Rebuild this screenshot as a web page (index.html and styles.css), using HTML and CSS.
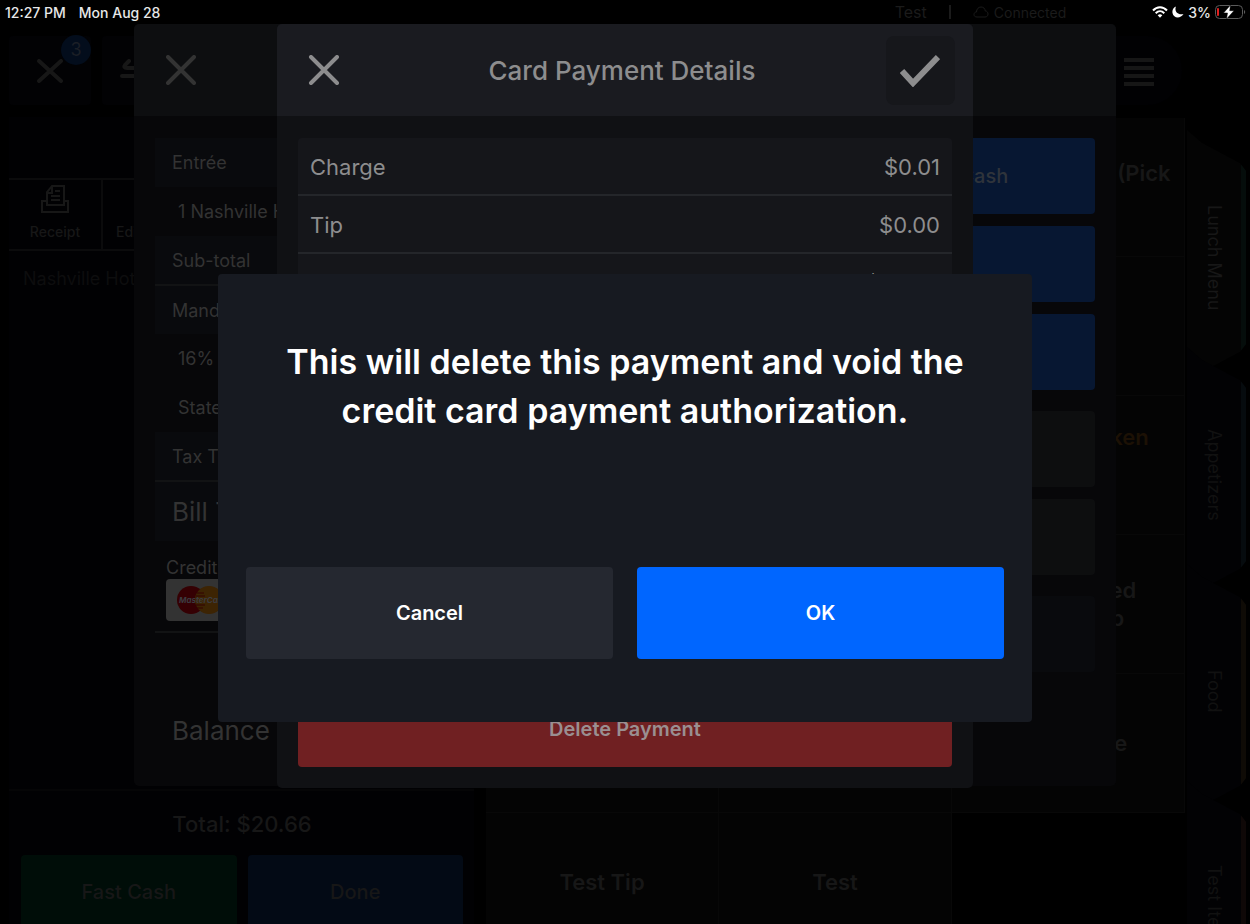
FILE: index.html
```html
<!DOCTYPE html>
<html lang="en">
<head>
    <meta charset="utf-8">
    <title>Card Payment Details</title>
    <link rel="stylesheet" href="styles.css">
</head>
<body>
    <header class="status">
        <span class="time">12:27 PM</span>
        <span>Mon Aug 28</span>
        <div class="station">
            <span class="name">Test</span>
            <span class="divider"></span>
            <svg width="16" height="12" viewBox="0 0 16 12" fill="none" stroke="currentColor"><path d="M4 11C2 11 1 10 1 8.500C1 7 2 6 3.500 6C3.500 3 5.500 1 8 1C10.500 1 12 2.500 12.300 5C14 5 15 6.300 15 8C15 9.800 14 11 12 11Z"/></svg>
            <span>Connected</span>
        </div>
        <div class="device">
            <svg width="16" height="12" viewBox="0 0 16 12" fill="none" stroke="#fff" stroke-width="2"><path d="M1 4.500C5 .2 11 .2 15 4.500M3.700 7.200C6.300 4.600 9.700 4.600 12.300 7.200"/><path d="M5.700 9.300C7 8 9 8 10.300 9.300L8 11.800Z" fill="#fff" stroke="none"/></svg>
            <svg width="12" height="12" viewBox="0 0 12 12"><path d="M4 .5C2 5 5.500 9.500 11.500 8C8.500 13 1.500 12.500 .5 7C0 4 1.500 1.500 4 .5Z" fill="#fff"/></svg>
            <span>3%</span>
            <svg width="31" height="14" viewBox="0 0 31 14"><rect x=".5" y=".5" width="27" height="13" rx="4" fill="none" stroke="#5b5b5b"/><path d="M29 5C30.600 5.500 30.600 8.500 29 9Z" fill="#5b5b5b"/><rect x="2" y="3" width="2" height="8" rx="1" fill="#e0201f"/><path d="M15.500 0L8.500 8H12.500L11.500 14L19 5.700H14.700Z" fill="#fff" stroke="#000" stroke-width=".5"/></svg>
        </div>
    </header>

    <main class="app">
        <nav class="toolbar">
            <button class="tool" aria-label="Close order">
                <svg width="26" height="24" viewBox="0 0 26 24"><path d="M2 2L24 22M24 2L2 22"/></svg>
                <span class="badge">3</span>
            </button>
            <button class="tool" aria-label="Undo">
                <svg width="46" height="24" viewBox="0 0 46 24"><path d="M9 2L5 6Q3 9 7 9H28M2 17H30"/></svg>
            </button>
            <button class="menu" aria-label="Menu">
                <svg width="30" height="30" viewBox="0 0 30 30"><path d="M0 4H30M0 12H30M0 20H30M0 28H30" stroke-width="4" stroke-linecap="butt"/></svg>
            </button>
        </nav>
        <div class="columns">
            <section class="order">
                <div class="order-head"></div>
                <div class="order-actions">
                    <button class="action">
                        <svg width="28" height="28" viewBox="0 0 28 28"><path d="M7 16H1V27H27V16H22M6 20V7L11 1H23V20ZM6 8H11V1M14 6H19M10 11H19M10 15H19" stroke-width="2" stroke-linecap="butt"/></svg>
                        Receipt
                    </button>
                    <button class="action">Edit Items</button>
                </div>
                <div class="order-items">Nashville Hot Chicken</div>
                <div class="order-foot">
                    <div class="total">Total: $20.66</div>
                    <div class="pay">
                        <button class="fast">Fast Cash</button>
                        <button class="done">Done</button>
                    </div>
                </div>
            </section>
            <section class="items">
                <button></button><button></button><button>Fried Tenders (Pick Two)</button>
                <button></button><button></button><button></button>
                <button></button><button></button><button class="orange">Crispy Chicken<br>and<br>Waffles</button>
                <button></button><button></button><button>Rice Mashed<br>Corn Soup</button>
                <button></button><button></button><button>Side Sauce</button>
                <button>Test Tip</button><button>Test</button>
            </section>
            <nav class="tabs">
                <a href="#" class="tab lunch">Lunch Menu</a>
                <a href="#" class="tab appetizers">Appetizers</a>
                <a href="#" class="tab food">Food</a>
                <a href="#" class="tab test">Test Items</a>
            </nav>
        </div>
    </main>

    <div class="layer layer-bill">
        <section class="modal bill">
            <header class="modal-head">
                <button class="close" aria-label="Close bill">
                    <svg width="32" height="30" viewBox="0 0 32 30"><path d="M3 2L29 28M29 2L3 28"/></svg>
                </button>
            </header>
            <div class="bill-body">
                <div class="bill-left">
                    <table class="lines">
                        <tr class="group"><th>Entrée</th></tr>
                        <tr><td>1 Nashville Hot Chicken</td></tr>
                        <tr class="group sum"><th>Sub-total</th></tr>
                        <tr class="group"><th>Mandatory</th></tr>
                        <tr><td>16% Gratuity</td></tr>
                        <tr><td>State Tax</td></tr>
                        <tr class="group sum"><th>Tax Total</th></tr>
                        <tr class="group big"><th>Bill Total</th></tr>
                    </table>
                    <div class="credit">
                        <span>Credit Card</span>
                        <svg width="66" height="42" viewBox="0 0 66 42"><rect width="66" height="42" rx="4" fill="#333"/><circle cx="25" cy="21" r="14" fill="#350003"/><circle cx="43" cy="21" r="14" fill="#3d2403"/><path d="M31 14H38M30 17H39M30 26H39M31 29H37" stroke="#350003"/><text x="13" y="24" class="brand">MasterCard</text></svg>
                    </div>
                    <div class="balance">Balance</div>
                </div>
                <div class="bill-right">
                    <button class="blue">Fast Cash</button>
                    <button class="blue"></button>
                    <button class="blue"></button>
                    <button class="gray first"></button>
                    <button class="gray"></button>
                    <button class="dark first"></button>
                </div>
            </div>
        </section>
    </div>

    <div class="layer layer-card">
        <section class="modal card">
            <header class="modal-head">
                <button class="close" aria-label="Close">
                    <svg width="32" height="30" viewBox="0 0 32 30"><path d="M3 2L29 28M29 2L3 28"/></svg>
                </button>
                <h2>Card Payment Details</h2>
                <button class="confirm" aria-label="Save">
                    <svg width="40" height="34" viewBox="0 0 40 34"><path d="M2 18L13 30L38 4" stroke-width="6" stroke-linecap="butt"/></svg>
                </button>
            </header>
            <div class="card-body">
                <table class="details">
                    <tr><th>Charge</th><td>$0.01</td></tr>
                    <tr><th>Tip</th><td>$0.00</td></tr>
                    <tr><th>Card</th><td>$20.66</td></tr>
                </table>
                <button class="delete">Delete Payment</button>
            </div>
        </section>
    </div>

    <div class="layer layer-alert">
        <section class="alert" role="alertdialog" aria-labelledby="message">
            <p id="message">This will delete this payment and void the credit card payment authorization.</p>
            <div class="alert-buttons">
                <button class="cancel">Cancel</button>
                <button class="ok">OK</button>
            </div>
        </section>
    </div>
</body>
</html>
```
FILE: styles.css
```css
* {
    box-sizing: border-box;
}

body {
    margin: 0;
    height: 100vh;
    display: flex;
    flex-direction: column;
    overflow: hidden;
    position: relative;
    background: #000;
    color: #171717;
    font-family: Inter, "Liberation Sans", sans-serif;
    font-size: 18px;
}

button {
    border: none;
    padding: 0;
    margin: 0;
    background: none;
    color: inherit;
    font: inherit;
    border-radius: 4px;
}

svg {
    flex: none;
}

button svg {
    fill: none;
    stroke: currentColor;
    stroke-width: 4;
    stroke-linecap: round;
    vertical-align: middle;
}

/* status bar */
.status {
    display: flex;
    align-items: center;
    height: 24px;
    flex: none;
    padding: 0 4px 0 5px;
    font-size: 14px;
    font-weight: 500;
    color: #e8e8e8;
}

.time {
    margin-right: 13px;
}

.station {
    display: flex;
    align-items: center;
    gap: 5px;
    margin-left: auto;
    margin-right: 86px;
    font-weight: 400;
    color: #1b1b1b;
}

.station .name {
    font-size: 16px;
}

.divider {
    width: 2px;
    height: 14px;
    margin: 0 17px;
    background: #1b1b1b;
}

.device {
    display: flex;
    align-items: center;
    gap: 4px;
}

/* order screen */
.app {
    flex: 1;
    min-height: 0;
    display: flex;
    flex-direction: column;
    padding: 12px 4px 0 9px;
}

.toolbar {
    display: flex;
    flex: none;
    gap: 11px;
    height: 69px;
    margin-bottom: 12px;
}

.tool {
    position: relative;
    width: 82px;
    background: #020204;
}

.badge {
    position: absolute;
    top: -1px;
    right: 0;
    width: 30px;
    height: 30px;
    border-radius: 50%;
    background: #030d1c;
    line-height: 30px;
    color: #1b1f26;
}

.menu {
    width: 116px;
    margin-left: auto;
    margin-right: 64px;
    padding-left: 30px;
    background: #010103;
    border-radius: 34px;
    color: #161616;
}

.columns {
    flex: 1;
    min-height: 0;
    display: flex;
    overflow: hidden;
}

.order {
    display: flex;
    flex-direction: column;
    flex: 1;
    margin-right: 12px;
    background: #010103;
}

.order-head {
    height: 61px;
}

.order-actions {
    display: flex;
    height: 73px;
    border: solid #0b0b0c;
    border-width: 2px 0;
}

.action {
    display: flex;
    flex-direction: column;
    align-items: center;
    justify-content: flex-end;
    gap: 10px;
    width: 94px;
    padding-bottom: 9px;
    border-right: 2px solid #0b0b0c;
    border-radius: 0;
    font-size: 14px;
    font-weight: 500;
    white-space: nowrap;
}

.order-items {
    flex: 1;
    padding: 17px 14px;
    color: #0d0d0e;
}

.order-foot {
    border-top: 2px solid #050506;
    padding: 20px 11px 0 12px;
}

.total {
    margin-bottom: 18px;
    text-align: center;
    font-size: 22px;
    font-weight: 500;
    line-height: 26px;
}

.pay {
    display: flex;
    gap: 11px;
    height: 69px;
    font-size: 20px;
    font-weight: 500;
}

.pay button {
    flex: 1;
    padding-top: 4px;
    border-radius: 4px 4px 0 0;
}

.fast {
    background: #000d08;
}

.done {
    background: #030a15;
}

.items {
    display: grid;
    grid-template-columns: repeat(3, 1fr);
    grid-auto-rows: 139px;
    flex: none;
    width: 57%;
    max-width: 699px;
    padding-top: 1px;
    overflow: hidden;
}

.items button {
    background: #040404;
    border: solid #080808;
    border-width: 0 1px 1px 0;
    border-radius: 0;
    font-size: 22px;
    font-weight: 600;
    line-height: 28px;
    color: #171717;
}

.items .orange {
    color: #1c1105;
}

.tabs {
    flex: none;
    width: 59px;
    margin-left: 2px;
    padding-top: 13px;
}

.tab {
    display: flex;
    align-items: center;
    justify-content: center;
    width: 100%;
    height: 255px;
    margin-bottom: -38px;
    writing-mode: vertical-rl;
    background: #020204;
    border-right: 5px solid #060b0e;
    clip-path: polygon(0 0, 25% 5%, 90% 13%, 100% 16%, 100% 84%, 90% 87%, 25% 95%, 0 100%);
    color: #111;
    text-decoration: none;
}

.lunch {
    background: #040404;
    border-right-color: #050d0b;
    color: #171717;
}

.food {
    border-right-color: #0f0b06;
}

.test {
    border-right-color: #0f0807;
}

/* dialogs stacked over the order screen */
.layer {
    position: absolute;
    inset: 0;
    display: flex;
}

.layer-bill {
    padding: 24px 134px 138px;
}

.layer-card {
    padding: 24px 277px 136px;
}

.layer-alert {
    align-items: center;
    padding: 72px 218px 0;
}

.modal {
    flex: 1;
    display: flex;
    flex-direction: column;
    border-radius: 5px;
    overflow: hidden;
}

.modal-head {
    display: flex;
    align-items: center;
    justify-content: space-between;
    flex: none;
    height: 92px;
    padding: 0 18px 0 12px;
}

.close,
.confirm {
    width: 69px;
    height: 69px;
}

.bill {
    background: #070709;
    color: #333;
}

.bill .modal-head {
    background: #0d0e10;
}

.bill-body {
    flex: 1;
    display: flex;
    justify-content: space-between;
    padding: 22px 21px;
}

.bill-left {
    display: flex;
    flex-direction: column;
    width: 56%;
}

.lines {
    width: 100%;
    border-collapse: collapse;
}

.lines th,
.lines td {
    height: 49px;
    padding: 0 17px;
    text-align: left;
    font-weight: 400;
}

.lines td {
    padding-left: 23px;
}

.group {
    background: #090a0d;
}

.sum {
    border-bottom: 2px solid #121314;
}

.lines .big th {
    height: 60px;
    font-size: 26px;
}

.credit {
    display: flex;
    flex-direction: column;
    gap: 1px;
    padding: 16px 11px 10px;
    border-bottom: 2px solid #121314;
}

.brand {
    font-size: 8px;
    font-style: italic;
    font-weight: 700;
    fill: #3c3c40;
}

.balance {
    margin-top: 82px;
    padding-left: 17px;
    font-size: 26px;
}

.bill-right {
    display: flex;
    flex-direction: column;
    gap: 12px;
    width: 268px;
    font-size: 20px;
    font-weight: 500;
    color: #2f343b;
}

.bill-right button {
    height: 76px;
}

.bill-right .first {
    margin-top: 9px;
}

.blue {
    background: #071732;
}

.gray {
    background: #0d0e0f;
}

.dark {
    background: #090a0d;
}

.card {
    background: #101114;
    color: #8d8d8e;
}

.card .modal-head {
    background: #1a1b20;
}

.card h2 {
    margin: 0;
    font-size: 26px;
    font-weight: 500;
}

.confirm {
    border-radius: 8px;
    background: #16171b;
}

.card-body {
    flex: 1;
    display: flex;
    flex-direction: column;
    justify-content: space-between;
    padding: 22px 21px 21px;
}

.details {
    width: 100%;
    border-spacing: 0;
    background: #15161a;
    border-radius: 4px;
    font-size: 22px;
}

.details th,
.details td {
    height: 58px;
    padding: 2px 12px 0;
    border-bottom: 2px solid #24262a;
    text-align: left;
    font-weight: 400;
}

.details td {
    text-align: right;
}

.delete {
    height: 76px;
    background: #702022;
    color: #9a8f91;
    font-size: 20px;
    font-weight: 600;
}

/* confirmation */
.alert {
    flex: 1;
    padding: 63px 28px;
    background: #171a21;
    border-radius: 4px;
}

.alert p {
    margin: 0 auto 132px;
    max-width: 700px;
    text-align: center;
    font-size: 34px;
    font-weight: 600;
    line-height: 49px;
    color: #fff;
}

.alert-buttons {
    display: flex;
    gap: 24px;
}

.alert-buttons button {
    flex: 1;
    height: 92px;
    font-size: 20px;
    font-weight: 600;
    color: #fff;
}

.cancel {
    background: #252830;
}

.alert-buttons .ok {
    background: #0066ff;
}
```
